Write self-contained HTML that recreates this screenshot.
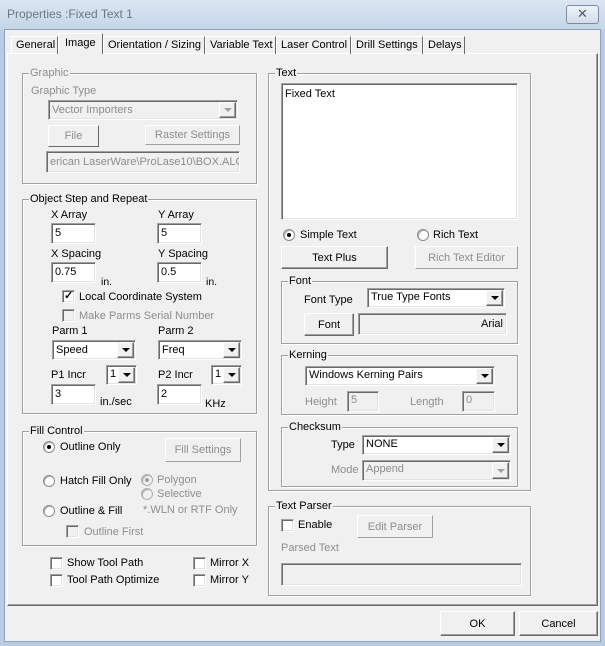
<!DOCTYPE html>
<html><head><meta charset="utf-8"><style>
*{box-sizing:border-box;margin:0;padding:0}
body{width:605px;height:646px;overflow:hidden;background:#b9cde2;font:11px "Liberation Sans",sans-serif;color:#000;position:relative}
.a{position:absolute}
.t{position:absolute;white-space:nowrap;line-height:13px;font-size:11px}
.dis{color:#8d8d8d}
.g{position:absolute;border:1px solid #a0a0a0;box-shadow:inset 1px 1px 0 #fff,1px 1px 0 #fff}
.g>.l{position:absolute;top:-8px;left:6px;background:#f0f0f0;padding:0 1px;line-height:14px;font-size:11px;white-space:nowrap}
.e{position:absolute;background:#fff;border:1px solid;border-color:#a0a0a0 #fff #fff #a0a0a0;box-shadow:inset 1px 1px 0 #696969,inset -1px -1px 0 #e3e3e3;padding:3px 0 0 3px;font-size:11px;line-height:13px;white-space:nowrap;overflow:hidden}
.e.d{background:#f0f0f0;color:#8d8d8d}
.b{position:absolute;background:#f0f0f0;border:1px solid;border-color:#fff #696969 #696969 #fff;box-shadow:inset -1px -1px 0 #a0a0a0;text-align:center;font-size:11px;white-space:nowrap;display:flex;align-items:center;justify-content:center}
.b.d{color:#8d8d8d;border-color:#fff #a0a0a0 #a0a0a0 #fff;box-shadow:none}
.ar{position:absolute;right:1px;top:1px;bottom:1px;width:17px;background:#f0f0f0;border:1px solid;border-color:#fff #696969 #696969 #fff;box-shadow:inset -1px -1px 0 #a0a0a0}
.ar:after{content:"";position:absolute;left:4px;top:50%;margin-top:-2px;border-left:4px solid transparent;border-right:4px solid transparent;border-top:4px solid #000}
.d .ar:after{border-top-color:#a0a0a0}
.cb{position:absolute;width:13px;height:13px;background:#fff;border:1px solid;border-color:#a0a0a0 #fff #fff #a0a0a0;box-shadow:inset 1px 1px 0 #696969,inset -1px -1px 0 #e3e3e3}
.cb.d{background:#f0f0f0}
.rd{position:absolute;width:12px;height:12px;border-radius:50%;background:#fff;border:1px solid #8a8a8a;box-shadow:inset 1px 1px 0 #b0b0b0}
.rd.on:after{content:"";position:absolute;left:3px;top:3px;width:4px;height:4px;border-radius:50%;background:#000}
.rd.d{background:#f0f0f0;border-color:#b0b0b0}
.rd.d.on:after{background:#a0a0a0}
</style></head><body>
<div class="a" style="left:0;top:0;width:605px;height:30px;background:linear-gradient(#dbe6f3,#c4d5e8)"></div>
<div class="t" style="left:7px;top:8px;color:#6d7680;font-size:12px">Properties :Fixed Text 1</div>
<div class="a" style="left:566px;top:5px;width:33px;height:19px;border:1px solid #7b8ca0;border-radius:3px;background:linear-gradient(#eef3f9,#d2dde9);color:#4a5a6c;font-size:13px;text-align:center;line-height:16px">✕</div>
<div class="a" style="left:4px;top:29px;width:597px;height:613px;background:#f0f0f0;border:1px solid #8ea2b8"></div>
<div class="a" style="left:7px;top:53px;width:591px;height:553px;border:1px solid;border-color:#fff #696969 #696969 #fff;box-shadow:inset -1px -1px 0 #a0a0a0"></div>
<div class="a" style="left:11px;top:36px;width:47px;height:18px;border:1px solid;border-color:#fff #696969 transparent #fff;border-bottom:none"></div><div class="t" style="left:16px;top:39px">General</div>
<div class="a" style="left:58px;top:33px;width:45px;height:21px;background:#f0f0f0;border:1px solid;border-color:#fff #696969 transparent #fff;border-bottom:none"></div><div class="t" style="left:65px;top:37px">Image</div>
<div class="a" style="left:103px;top:36px;width:102px;height:18px;border:1px solid;border-color:#fff #696969 transparent #fff;border-bottom:none"></div><div class="t" style="left:108px;top:39px">Orientation / Sizing</div>
<div class="a" style="left:205px;top:36px;width:71px;height:18px;border:1px solid;border-color:#fff #696969 transparent #fff;border-bottom:none"></div><div class="t" style="left:210px;top:39px">Variable Text</div>
<div class="a" style="left:276px;top:36px;width:75px;height:18px;border:1px solid;border-color:#fff #696969 transparent #fff;border-bottom:none"></div><div class="t" style="left:281px;top:39px">Laser Control</div>
<div class="a" style="left:351px;top:36px;width:72px;height:18px;border:1px solid;border-color:#fff #696969 transparent #fff;border-bottom:none"></div><div class="t" style="left:356px;top:39px">Drill Settings</div>
<div class="a" style="left:423px;top:36px;width:42px;height:18px;border:1px solid;border-color:#fff #696969 transparent #fff;border-bottom:none"></div><div class="t" style="left:428px;top:39px">Delays</div>

<div class="g" style="left:22px;top:73px;width:235px;height:111px"><span class="l dis">Graphic</span></div>
<div class="t dis" style="left:31px;top:85px">Graphic Type</div>
<div class="e d" style="left:48px;top:100px;width:190px;height:20px">Vector Importers<div class="ar"></div></div>
<div class="b d" style="left:48px;top:125px;width:51px;height:22px;border-color:#fff #696969 #696969 #fff">File</div>
<div class="b d" style="left:145px;top:125px;width:95px;height:20px">Raster Settings</div>
<div class="e d" style="left:46px;top:151px;width:194px;height:22px;padding-top:4px">erican LaserWare\ProLase10\BOX.ALG</div>

<div class="g" style="left:22px;top:199px;width:235px;height:215px"><span class="l">Object Step and Repeat</span></div>
<div class="t" style="left:51px;top:209px">X Array</div>
<div class="t" style="left:158px;top:209px">Y Array</div>
<div class="e" style="left:51px;top:223px;width:45px;height:21px">5</div>
<div class="e" style="left:157px;top:223px;width:45px;height:21px">5</div>
<div class="t" style="left:51px;top:248px">X Spacing</div>
<div class="t" style="left:158px;top:248px">Y Spacing</div>
<div class="e" style="left:51px;top:262px;width:45px;height:21px">0.75</div>
<div class="e" style="left:157px;top:262px;width:45px;height:21px">0.5</div>
<div class="t" style="left:101px;top:276px;font-size:10.5px">in.</div>
<div class="t" style="left:206px;top:276px;font-size:10.5px">in.</div>
<div class="cb" style="left:62px;top:290px"><span style="position:absolute;left:1px;top:-2px;font-size:11px;font-weight:bold">✓</span></div>
<div class="t" style="left:79px;top:291px">Local Coordinate System</div>
<div class="cb d" style="left:62px;top:309px"></div>
<div class="t dis" style="left:79px;top:310px">Make Parms Serial Number</div>
<div class="t" style="left:52px;top:325px">Parm 1</div>
<div class="t" style="left:158px;top:325px">Parm 2</div>
<div class="e" style="left:52px;top:340px;width:84px;height:20px">Speed<div class="ar"></div></div>
<div class="e" style="left:158px;top:340px;width:84px;height:20px">Freq<div class="ar"></div></div>
<div class="t" style="left:51px;top:369px">P1 Incr</div>
<div class="t" style="left:158px;top:369px">P2 Incr</div>
<div class="e" style="left:106px;top:365px;width:31px;height:20px;padding-top:2px">1<div class="ar"></div></div>
<div class="e" style="left:211px;top:365px;width:31px;height:20px;padding-top:2px">1<div class="ar"></div></div>
<div class="e" style="left:51px;top:384px;width:45px;height:21px">3</div>
<div class="e" style="left:157px;top:384px;width:45px;height:21px">2</div>
<div class="t" style="left:100px;top:396px">in./sec</div>
<div class="t" style="left:205px;top:398px">KHz</div>

<div class="g" style="left:22px;top:431px;width:235px;height:115px"><span class="l">Fill Control</span></div>
<div class="rd on" style="left:43px;top:441px"></div><div class="t" style="left:60px;top:441px">Outline Only</div>
<div class="b d" style="left:165px;top:438px;width:76px;height:24px">Fill Settings</div>
<div class="rd" style="left:43px;top:475px"></div><div class="t" style="left:60px;top:475px">Hatch Fill Only</div>
<div class="rd d on" style="left:141px;top:474px"></div><div class="t dis" style="left:157px;top:474px">Polygon</div>
<div class="rd d" style="left:141px;top:488px"></div><div class="t dis" style="left:157px;top:488px">Selective</div>
<div class="t dis" style="left:143px;top:504px">*.WLN or RTF Only</div>
<div class="rd" style="left:43px;top:505px"></div><div class="t" style="left:60px;top:505px">Outline &amp; Fill</div>
<div class="cb d" style="left:66px;top:525px"></div><div class="t dis" style="left:84px;top:526px">Outline First</div>

<div class="cb" style="left:50px;top:557px"></div><div class="t" style="left:67px;top:557px">Show Tool Path</div>
<div class="cb" style="left:50px;top:574px"></div><div class="t" style="left:67px;top:574px">Tool Path Optimize</div>
<div class="cb" style="left:193px;top:557px"></div><div class="t" style="left:210px;top:557px">Mirror X</div>
<div class="cb" style="left:193px;top:574px"></div><div class="t" style="left:210px;top:574px">Mirror Y</div>

<div class="g" style="left:268px;top:73px;width:263px;height:418px"><span class="l">Text</span></div>
<div class="e" style="left:281px;top:83px;width:237px;height:137px;padding:4px 3px">Fixed Text</div>
<div class="rd on" style="left:283px;top:229px"></div><div class="t" style="left:300px;top:229px">Simple Text</div>
<div class="rd" style="left:417px;top:229px"></div><div class="t" style="left:433px;top:229px">Rich Text</div>
<div class="b" style="left:281px;top:246px;width:107px;height:23px">Text Plus</div>
<div class="b d" style="left:415px;top:246px;width:103px;height:23px">Rich Text Editor</div>

<div class="g" style="left:281px;top:281px;width:237px;height:63px"><span class="l">Font</span></div>
<div class="t" style="left:304px;top:294px">Font Type</div>
<div class="e" style="left:367px;top:288px;width:138px;height:20px;padding-top:2px">True Type Fonts<div class="ar"></div></div>
<div class="b" style="left:304px;top:313px;width:50px;height:23px">Font</div>
<div class="e d" style="left:358px;top:313px;width:149px;height:22px;text-align:right;padding:4px 3px 0 0;color:#000">Arial</div>

<div class="g" style="left:281px;top:355px;width:237px;height:60px"><span class="l">Kerning</span></div>
<div class="e" style="left:305px;top:366px;width:190px;height:20px;padding-top:2px">Windows Kerning Pairs<div class="ar"></div></div>
<div class="t dis" style="left:305px;top:396px">Height</div>
<div class="e d" style="left:347px;top:391px;width:32px;height:21px;padding-top:2px">5</div>
<div class="t dis" style="left:410px;top:396px">Length</div>
<div class="e d" style="left:462px;top:391px;width:33px;height:21px;padding-top:2px">0</div>

<div class="g" style="left:281px;top:427px;width:237px;height:60px"><span class="l">Checksum</span></div>
<div class="t" style="left:331px;top:439px">Type</div>
<div class="e" style="left:362px;top:435px;width:149px;height:20px;padding-top:2px">NONE<div class="ar"></div></div>
<div class="t dis" style="left:331px;top:464px">Mode</div>
<div class="e d" style="left:362px;top:460px;width:149px;height:21px;padding-top:2px">Append<div class="ar"></div></div>

<div class="g" style="left:268px;top:506px;width:263px;height:90px"><span class="l">Text Parser</span></div>
<div class="cb" style="left:281px;top:519px"></div><div class="t" style="left:298px;top:519px">Enable</div>
<div class="b d" style="left:357px;top:515px;width:76px;height:23px">Edit Parser</div>
<div class="t dis" style="left:281px;top:542px">Parsed Text</div>
<div class="e d" style="left:281px;top:563px;width:241px;height:23px"></div>

<div class="b" style="left:440px;top:611px;width:75px;height:25px">OK</div>
<div class="b" style="left:519px;top:611px;width:79px;height:25px">Cancel</div>
</body></html>
